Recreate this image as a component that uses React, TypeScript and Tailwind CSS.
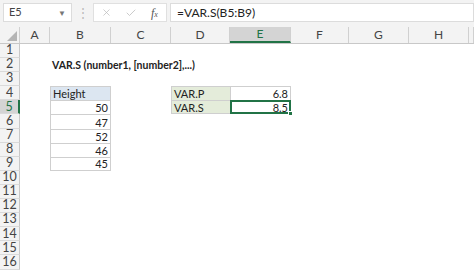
import React from 'react';
import { X, Check } from 'lucide-react';

const cols = [
  { name: '', w: 20 },
  { name: 'A', w: 30 },
  { name: 'B', w: 61 },
  { name: 'C', w: 60 },
  { name: 'D', w: 59 },
  { name: 'E', w: 61 },
  { name: 'F', w: 58 },
  { name: 'G', w: 60 },
  { name: 'H', w: 60 },
  { name: '', w: 5 },
];

type Cell = { text: string; cls?: string };

const cells: Record<string, Cell> = {
  B2: { text: 'VAR.S (number1, [number2],...)', cls: 'font-bold text-[10.5px] pl-[2px] whitespace-nowrap overflow-visible' },
  B4: { text: 'Height', cls: 'bg-[#dce6f1] border-t border-l border-r border-[#cfcfcf] pl-[2px]' },
  B5: { text: '50', cls: 'border-t border-l border-r border-[#cfcfcf] justify-end pr-[2px]' },
  B6: { text: '47', cls: 'border-t border-l border-r border-[#cfcfcf] justify-end pr-[2px]' },
  B7: { text: '52', cls: 'border-t border-l border-r border-[#cfcfcf] justify-end pr-[2px]' },
  B8: { text: '46', cls: 'border-t border-l border-r border-[#cfcfcf] justify-end pr-[2px]' },
  B9: { text: '45', cls: 'border border-[#cfcfcf] justify-end pr-[2px]' },
  D4: { text: 'VAR.P', cls: 'bg-[#e4ecda] border-t border-l border-[#cfcfcf] pl-[2px]' },
  D5: { text: 'VAR.S', cls: 'bg-[#e4ecda] border-t border-l border-b border-[#cfcfcf] pl-[2px]' },
  E4: { text: '6.8', cls: 'border-t border-l border-r border-[#cfcfcf] justify-end pr-[2px]' },
  E5: { text: '8.5', cls: 'border-2 border-[#217346] justify-end pr-[1px] relative' },
};

const rows = Array.from({ length: 16 }, (_, i) => i + 1);

const FormulaBar = () => (
  <div className="h-[27px] bg-[#f3f3f3] flex items-start pt-[3px] text-[11px] text-[#444]">
    <div className="ml-[3px] w-[69px] h-[19px] bg-white border border-[#dcdcdc] flex items-center px-[5px] justify-between">
      <span>E5</span>
      <span className="text-[8px] text-[#777]">▼</span>
    </div>
    <div className="w-[21px] h-[19px] flex items-center justify-center text-[#b8b8b8] text-[12px]">⋮</div>
    <div className="w-[74px] h-[19px] bg-white border border-[#e0e0e0] flex items-center">
      <X size={11} strokeWidth={1.5} className="ml-[7px] text-[#b9b9b9]" />
      <Check size={12} strokeWidth={1.5} className="ml-[13px] text-[#b9b9b9]" />
      <span className="ml-[14px] italic text-[#555] font-['Liberation_Serif',serif] text-[12px]">
        f<span className="text-[8px]">x</span>
      </span>
    </div>
    <div className="ml-[3px] flex-1 h-[19px] bg-white border border-[#dcdcdc] flex items-center pl-[6px] text-[12px] text-[#222]">
      =VAR.S(B5:B9)
    </div>
  </div>
);

const HeaderRow = () => (
  <div className="flex h-[17px] bg-[#f3f3f3] border-b border-[#c8c8c8] text-[12px] text-[#444]">
    {cols.map((c, i) =>
      i === 0 ? (
        <div key={i} style={{ width: c.w }} className="shrink-0 border-r border-[#d0d0d0] relative">
          <svg width="10" height="10" viewBox="0 0 10 10" className="absolute right-[2px] bottom-[2px]">
            <polygon points="10,0 10,10 0,10" fill="#b5b5b5" />
          </svg>
        </div>
      ) : (
        <div
          key={i}
          style={{ width: c.w }}
          className={`shrink-0 flex items-center justify-center border-r border-[#d0d0d0] ${
            c.name === 'E' ? 'bg-[#d4d4d4] border-b-2 border-b-[#217346] text-[#217346]' : ''
          }`}
        >
          {c.name}
        </div>
      )
    )}
  </div>
);

export default function App() {
  return (
    <div className="w-[474px] h-[270px] overflow-hidden bg-white font-['Lato',sans-serif] text-[#222]">
      <FormulaBar />
      <HeaderRow />
      {rows.map(r => (
        <div key={r} className="flex h-[14.1px] text-[11px] leading-none">
          <div
            className={`w-[20px] shrink-0 flex items-center justify-center border-b border-[#dadada] text-[12.5px] text-[#444] ${
              r === 5 ? 'bg-[#d4d4d4] border-r-2 border-r-[#217346] text-[#217346]' : 'bg-[#f3f3f3] border-r border-r-[#c8c8c8]'
            }`}
          >
            {r}
          </div>
          {cols.slice(1).map((c, i) => {
            const key = `${c.name}${r}`;
            const cell = c.name ? cells[key] : undefined;
            return (
              <div key={i} style={{ width: c.w }} className={`shrink-0 flex items-center ${cell?.cls ?? ''}`}>
                {cell?.text}
                {key === 'E5' && (
                  <span className="absolute right-[-4px] bottom-[-4px] w-[5px] h-[5px] bg-[#217346] border border-white" />
                )}
              </div>
            );
          })}
        </div>
      ))}
    </div>
  );
}
